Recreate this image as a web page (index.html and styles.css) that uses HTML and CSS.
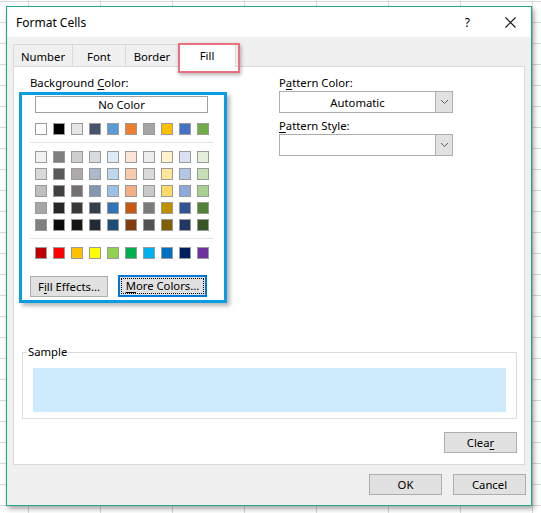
FILE: index.html
```html
<!DOCTYPE html>
<html>
<head>
<meta charset="utf-8">
<title>Format Cells</title>
<link rel="stylesheet" href="styles.css">
</head>
<body>
<div class="window">
  <div class="titlebar">
    <span class="title">Format Cells</span>
    <div class="title-controls">
      <span class="help">?</span>
      <svg class="close" width="11" height="11" viewBox="0 0 11 11"><path d="M0.5 0.5L10.5 10.5M10.5 0.5L0.5 10.5" stroke="#111" stroke-width="1.1" fill="none"/></svg>
    </div>
  </div>
  <div class="body">
    <div class="tabs">
      <div class="tab t-number">Number</div>
      <div class="tab t-font">Font</div>
      <div class="tab t-border">Border</div>
      <div class="tab t-fill active">Fill</div>
    </div>
    <div class="panel">
      <div class="top">
        <div class="left-col">
          <div class="label bg-label">Background <u>C</u>olor:</div>
          <div class="palette">
            <div class="nocolor">No Color</div>
            <div class="swatch-row r1">
              <span class="sw" style="background:#FFFFFF"></span>
              <span class="sw" style="background:#000000"></span>
              <span class="sw" style="background:#E7E6E6"></span>
              <span class="sw" style="background:#44546A"></span>
              <span class="sw" style="background:#5B9BD5"></span>
              <span class="sw" style="background:#ED7D31"></span>
              <span class="sw" style="background:#A5A5A5"></span>
              <span class="sw" style="background:#FFC000"></span>
              <span class="sw" style="background:#4472C4"></span>
              <span class="sw" style="background:#70AD47"></span>
            </div>
            <div class="sep"></div>
            <div class="tints">
              <div class="swatch-row">
                <span class="sw" style="background:#F2F2F2"></span>
                <span class="sw" style="background:#7F7F7F"></span>
                <span class="sw" style="background:#D0CECE"></span>
                <span class="sw" style="background:#D6DCE4"></span>
                <span class="sw" style="background:#DDEBF7"></span>
                <span class="sw" style="background:#FCE4D6"></span>
                <span class="sw" style="background:#EDEDED"></span>
                <span class="sw" style="background:#FFF2CC"></span>
                <span class="sw" style="background:#D9E1F2"></span>
                <span class="sw" style="background:#E2EFDA"></span>
              </div>
              <div class="swatch-row">
                <span class="sw" style="background:#D9D9D9"></span>
                <span class="sw" style="background:#595959"></span>
                <span class="sw" style="background:#AEAAAA"></span>
                <span class="sw" style="background:#ACB9CA"></span>
                <span class="sw" style="background:#BDD7EE"></span>
                <span class="sw" style="background:#F8CBAD"></span>
                <span class="sw" style="background:#DBDBDB"></span>
                <span class="sw" style="background:#FFE699"></span>
                <span class="sw" style="background:#B4C6E7"></span>
                <span class="sw" style="background:#C6E0B4"></span>
              </div>
              <div class="swatch-row">
                <span class="sw" style="background:#BFBFBF"></span>
                <span class="sw" style="background:#404040"></span>
                <span class="sw" style="background:#757171"></span>
                <span class="sw" style="background:#8497B0"></span>
                <span class="sw" style="background:#9BC2E6"></span>
                <span class="sw" style="background:#F4B084"></span>
                <span class="sw" style="background:#C9C9C9"></span>
                <span class="sw" style="background:#FFD966"></span>
                <span class="sw" style="background:#8EA9DB"></span>
                <span class="sw" style="background:#A9D08E"></span>
              </div>
              <div class="swatch-row">
                <span class="sw" style="background:#A6A6A6"></span>
                <span class="sw" style="background:#262626"></span>
                <span class="sw" style="background:#3B3838"></span>
                <span class="sw" style="background:#333F4F"></span>
                <span class="sw" style="background:#2F75B5"></span>
                <span class="sw" style="background:#C65911"></span>
                <span class="sw" style="background:#7B7B7B"></span>
                <span class="sw" style="background:#BF8F00"></span>
                <span class="sw" style="background:#305496"></span>
                <span class="sw" style="background:#548235"></span>
              </div>
              <div class="swatch-row">
                <span class="sw" style="background:#808080"></span>
                <span class="sw" style="background:#0D0D0D"></span>
                <span class="sw" style="background:#171616"></span>
                <span class="sw" style="background:#222B35"></span>
                <span class="sw" style="background:#1F4E78"></span>
                <span class="sw" style="background:#833C0C"></span>
                <span class="sw" style="background:#525252"></span>
                <span class="sw" style="background:#806000"></span>
                <span class="sw" style="background:#203764"></span>
                <span class="sw" style="background:#375623"></span>
              </div>
            </div>
            <div class="sep"></div>
            <div class="swatch-row">
              <span class="sw" style="background:#C00000"></span>
              <span class="sw" style="background:#FF0000"></span>
              <span class="sw" style="background:#FFC000"></span>
              <span class="sw" style="background:#FFFF00"></span>
              <span class="sw" style="background:#92D050"></span>
              <span class="sw" style="background:#00B050"></span>
              <span class="sw" style="background:#00B0F0"></span>
              <span class="sw" style="background:#0070C0"></span>
              <span class="sw" style="background:#002060"></span>
              <span class="sw" style="background:#7030A0"></span>
            </div>
            <div class="pal-buttons">
              <div class="btn fill-effects">F<u>i</u>ll Effects...</div>
              <div class="btn more-colors"><span class="focus-ring"><u>M</u>ore Colors...</span></div>
            </div>
          </div>
        </div>
        <div class="right-col">
          <div class="label">P<u>a</u>ttern Color:</div>
          <div class="combo">
            <span class="combo-text">Automatic</span>
            <span class="combo-btn"><svg width="9" height="6" viewBox="0 0 9 6"><path d="M1 1L4.5 4.5L8 1" stroke="#606060" stroke-width="1" fill="none"/></svg></span>
          </div>
          <div class="label label-2"><u>P</u>attern Style:</div>
          <div class="combo">
            <span class="combo-text"></span>
            <span class="combo-btn"><svg width="9" height="6" viewBox="0 0 9 6"><path d="M1 1L4.5 4.5L8 1" stroke="#606060" stroke-width="1" fill="none"/></svg></span>
          </div>
        </div>
      </div>
      <fieldset class="sample">
        <legend>Sample</legend>
        <div class="sample-fill"></div>
      </fieldset>
      <div class="clear-row"><div class="btn clear">Clea<u>r</u></div></div>
    </div>
    <div class="footer">
      <div class="btn ok">OK</div>
      <div class="btn cancel">Cancel</div>
    </div>
  </div>
</div>
</body>
</html>
```
FILE: styles.css
```css
* { box-sizing: border-box; }
html, body { margin: 0; padding: 0; }
body {
  width: 541px;
  height: 513px;
  overflow: hidden;
  font-family: "Segoe UI", "Noto Sans", "Open Sans", sans-serif;
  font-size: 11.3px;
  color: #000;
  background-color: #fff;
  background-image:
    linear-gradient(to right, #d8d8d8 1px, transparent 1px),
    linear-gradient(to bottom, #d8d8d8 1px, transparent 1px);
  background-size: 72px 100%, 100% 21px;
  background-position: 28px 0, 0 22px;
  padding: 6px 0 0 6px;
}
u { text-underline-offset: 2px; text-decoration-thickness: 1px; }

.window {
  width: 526px;
  height: 500px;
  border: 1px solid #1fa88d;
  background: #f0f0f0;
  box-shadow: 2px 3px 5px rgba(0,0,0,0.35);
  display: flex;
  flex-direction: column;
}
.titlebar {
  height: 30px;
  flex: none;
  background: #fff;
  display: flex;
  align-items: center;
  justify-content: space-between;
  padding: 1px 15px 0 9px;
}
.title { font-size: 12px; line-height: 16px; }
.title-controls { display: flex; align-items: center; }
.help { font-size: 12px; margin-right: 35px; line-height: 16px; }
.close { display: block; }

.body {
  flex: 1;
  padding: 7px 6px 0 6px;
  display: flex;
  flex-direction: column;
}
.tabs {
  display: flex;
  align-items: flex-end;
  height: 22px;
  position: relative;
  z-index: 2;
}
.tab {
  height: 22px;
  border: 1px solid #d9d9d9;
  border-bottom: none;
  background: #f0f0f0;
  display: flex;
  align-items: center;
  justify-content: center;
  margin-left: -1px;
  line-height: 16px;
  padding-top: 2px;
}
.t-number { width: 60px; margin-left: 0; }
.t-font { width: 54px; }
.t-border { width: 54px; }
.t-fill { width: 58px; }
.tab.active {
  background: #fff;
  height: 24px;
  margin-bottom: -1px;
  padding-top: 1px;
  position: relative;
}
.tab.active::after {
  content: "";
  position: absolute;
  left: -1px;
  top: -1px;
  width: 58px;
  height: 26px;
  border: 2px solid #e8707f;
  box-shadow: 1px 2px 4px rgba(0,0,0,0.3);
}

.panel {
  width: 512px;
  height: 399px;
  flex: none;
  background: #fff;
  border: 1px solid #d9d9d9;
  padding-top: 7px;
  display: flex;
  flex-direction: column;
}
.top { display: flex; }
.left-col { width: 265px; padding-left: 5px; }
.label { height: 16px; line-height: 16px; padding-top: 1px; white-space: nowrap; }
.bg-label { margin-left: 11px; }

.palette {
  margin-top: 2px;
  width: 208px;
  height: 211px;
  border: 3px solid #0b9de3;
  background: #fff;
  box-shadow: 3px 3px 4px rgba(0,0,0,0.28);
  padding-top: 1px;
  display: flex;
  flex-direction: column;
}
.nocolor {
  margin-left: 13px;
  width: 173px;
  height: 17px;
  border: 1px solid #a0a0a0;
  text-align: center;
  line-height: 15px;
}
.swatch-row {
  display: flex;
  gap: 6px;
  margin-left: 13px;
  height: 12px;
}
.r1 { margin-top: 10px; }
.sw {
  width: 12px;
  height: 12px;
  border: 1px solid #9a9a9a;
  display: block;
}
.sep {
  margin: 7px 0 8px 8px;
  width: 183px;
  height: 1px;
  background: #e2e2e2;
}
.tints { display: flex; flex-direction: column; gap: 5px; }

.btn {
  background: #e1e1e1;
  border: 1px solid #adadad;
  display: flex;
  align-items: center;
  justify-content: center;
  line-height: 16px;
  white-space: nowrap;
  padding-top: 1px;
}
.pal-buttons {
  margin-top: 16px;
  padding-left: 8px;
  display: flex;
  align-items: flex-end;
}
.fill-effects { width: 78px; height: 21px; }
.more-colors {
  width: 89px;
  height: 22px;
  margin-left: 10px;
  border: 2px solid #0078d7;
  padding: 1px;
}
.focus-ring {
  width: 100%;
  height: 100%;
  border: 1px dotted #000;
  display: flex;
  align-items: center;
  justify-content: center;
}

.right-col { width: 174px; }
.combo {
  margin-top: 1px;
  width: 174px;
  height: 22px;
  border: 1px solid #adadad;
  background: #fff;
  display: flex;
}
.combo-text {
  flex: 1;
  text-align: center;
  line-height: 20px;
  padding-top: 1px;
}
.combo-btn {
  width: 17px;
  background: #e1e1e1;
  border-left: 1px solid #adadad;
  display: flex;
  align-items: center;
  justify-content: center;
}
.combo-btn svg { display: block; }
.label-2 { margin-top: 4px; }

.sample {
  margin: 41px 0 0 8px;
  width: 495px;
  border: 1px solid #dcdcdc;
  padding: 0 10px 6px 10px;
  min-width: 0;
}
.sample legend {
  padding: 0 1px;
  margin-left: -6px;
  line-height: 16px;
}
.sample-fill {
  margin-top: 8px;
  height: 44px;
  width: 473px;
  background: #cdebfd;
}
.clear-row {
  display: flex;
  justify-content: flex-end;
  padding-right: 7px;
  margin-top: 13px;
}
.clear { width: 73px; height: 21px; }

.footer {
  display: flex;
  justify-content: flex-end;
  gap: 11px;
  margin-top: 9px;
  margin-right: -1px;
}
.ok, .cancel { width: 73px; height: 21px; }
```
